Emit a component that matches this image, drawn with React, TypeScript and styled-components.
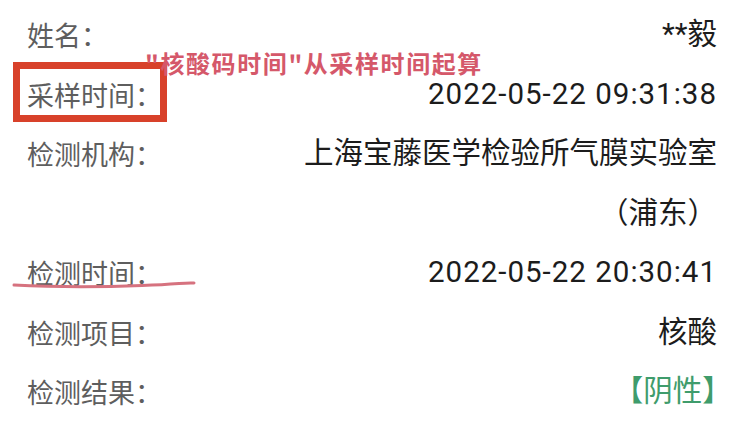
import React from "react";
import styled, { createGlobalStyle } from "styled-components";

const Global = createGlobalStyle`
  html, body { margin: 0; padding: 0; background: #ffffff; }
  body { width: 750px; height: 422px; overflow: hidden; }
`;

const Page = styled.div`
  position: relative;
  width: 750px;
  height: 422px;
  box-sizing: border-box;
  padding: 5px 33px 0 27px;
  background: #fff;
`;

const List = styled.div`
  display: grid;
  grid-template-columns: 1fr auto;
  row-gap: 0;
`;

const Label = styled.div`
  font-family: "Noto Sans CJK SC", sans-serif;
  font-size: 27px;
  line-height: 59.5px;
  color: #5e5e5e;
  white-space: nowrap;
`;

type Tone = "plain" | "number" | "green";

const Value = styled.div<{ $tone: Tone }>`
  font-family: Roboto, "Noto Sans CJK SC", sans-serif;
  font-size: 29.5px;
  line-height: 59.5px;
  color: ${(p) => (p.$tone === "green" ? "#3f9c6c" : "#1c1c1c")};
  letter-spacing: ${(p) => (p.$tone === "number" ? "1px" : "0")};
  font-feature-settings: ${(p) => (p.$tone === "green" ? '"halt"' : "normal")};
  text-align: right;
  max-width: 425px;
  justify-self: end;
`;

const Box = styled.div`
  position: absolute;
  left: 13px;
  top: 62px;
  width: 154px;
  height: 60px;
  box-sizing: border-box;
  border: 7px solid #d8412a;
`;

const Note = styled.div`
  position: absolute;
  left: 145px;
  top: 48px;
  font-family: "Noto Sans CJK SC", sans-serif;
  font-weight: 700;
  font-size: 24px;
  letter-spacing: 1.6px;
  line-height: 30px;
  color: #d5586a;
  white-space: nowrap;
`;

const Underline = styled.svg`
  position: absolute;
  left: 12px;
  top: 279px;
`;

const rows: { label: string; value: string; tone: Tone }[] = [
  { label: "姓名：", value: "**毅", tone: "plain" },
  { label: "采样时间：", value: "2022-05-22 09:31:38", tone: "number" },
  { label: "检测机构：", value: "上海宝藤医学检验所气膜实验室（浦东）", tone: "plain" },
  { label: "检测时间：", value: "2022-05-22 20:30:41", tone: "number" },
  { label: "检测项目：", value: "核酸", tone: "plain" },
  { label: "检测结果：", value: "【阴性】", tone: "green" },
];

export default function App() {
  return (
    <>
      <Global />
      <Page>
        <List>
          {rows.map((r) => (
            <React.Fragment key={r.label}>
              <Label>{r.label}</Label>
              <Value $tone={r.tone}>{r.value}</Value>
            </React.Fragment>
          ))}
        </List>
        <Box />
        <Note>"核酸码时间"从采样时间起算</Note>
        <Underline width="185" height="12" viewBox="0 0 185 12">
          <path
            d="M2 6 C 40 8, 90 8, 130 6.5 S 170 3.5, 182 4"
            fill="none"
            stroke="#d6727f"
            strokeWidth="3"
            strokeLinecap="round"
          />
        </Underline>
      </Page>
    </>
  );
}
